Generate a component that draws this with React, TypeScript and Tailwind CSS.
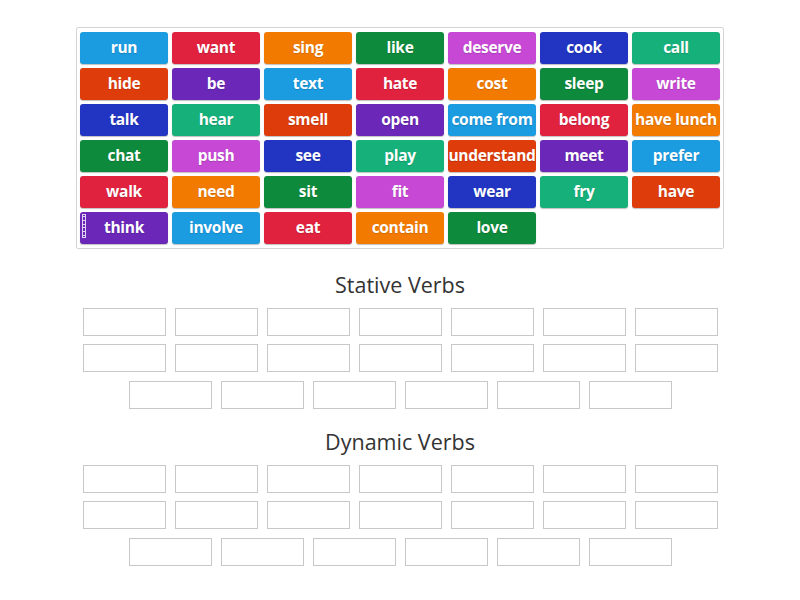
const palette = [
  "bg-[#1b9be0]",
  "bg-[#e0223f]",
  "bg-[#f27a00]",
  "bg-[#0e8a3c]",
  "bg-[#c648d4]",
  "bg-[#2134c2]",
  "bg-[#16b07a]",
  "bg-[#de3c0b]",
  "bg-[#6a27b8]",
];

const words = [
  "run", "want", "sing", "like", "deserve", "cook", "call",
  "hide", "be", "text", "hate", "cost", "sleep", "write",
  "talk", "hear", "smell", "open", "come from", "belong", "have lunch",
  "chat", "push", "see", "play", "understand", "meet", "prefer",
  "walk", "need", "sit", "fit", "wear", "fry", "have",
  "think", "involve", "eat", "contain", "love",
];

function Tile({ word, color, handle }: { word: string; color: string; handle?: boolean }) {
  return (
    <div
      className={`relative h-[32px] rounded-[3px] ${color} flex items-center justify-center pb-[1px] text-white font-bold text-[15.5px] leading-none tracking-[-0.3px] whitespace-nowrap shadow-[0_1px_1px_rgba(0,0,0,0.25)]`}
    >
      {handle && (
        <div className="absolute left-[2px] top-[2px] w-[4px] h-[24px] border border-white/80 flex flex-col justify-between py-[1px]">
          {Array.from({ length: 6 }).map((_, i) => (
            <div key={i} className="h-[1px] bg-white/80" />
          ))}
        </div>
      )}
      <span className="[text-shadow:0_1px_1px_rgba(0,0,0,0.15)]">{word}</span>
    </div>
  );
}

function Slot() {
  return <div className="w-[83px] h-[28px] border border-[#c8c8c8] bg-white" />;
}

function Group({ title }: { title: string }) {
  return (
    <div className="flex flex-col items-center">
      <div className="h-[26px] flex items-center text-[21.5px] text-[#333] leading-none">{title}</div>
      <div className="mt-[10px] flex flex-col items-center">
        <div className="flex gap-[9px]">
          {Array.from({ length: 7 }).map((_, i) => <Slot key={i} />)}
        </div>
        <div className="mt-[8px] flex gap-[9px]">
          {Array.from({ length: 7 }).map((_, i) => <Slot key={i} />)}
        </div>
        <div className="mt-[9px] flex gap-[9px]">
          {Array.from({ length: 6 }).map((_, i) => <Slot key={i} />)}
        </div>
      </div>
    </div>
  );
}

export default function App() {
  return (
    <div className="w-[800px] h-[600px] bg-white overflow-hidden" style={{ fontFamily: '"Open Sans", sans-serif' }}>
      <div className="pt-[27px] flex justify-center">
        <div className="w-[648px] border border-[#d4d4d4] rounded-[2px] pt-[4px] pb-[4px] px-[3px] grid grid-cols-7 gap-x-[4px] gap-y-[4px]">
          {words.map((w, i) => (
            <Tile key={w} word={w} color={palette[i % 9]} handle={w === "think"} />
          ))}
        </div>
      </div>
      <div className="mt-[23px]">
        <Group title="Stative Verbs" />
      </div>
      <div className="mt-[20px]">
        <Group title="Dynamic Verbs" />
      </div>
    </div>
  );
}
